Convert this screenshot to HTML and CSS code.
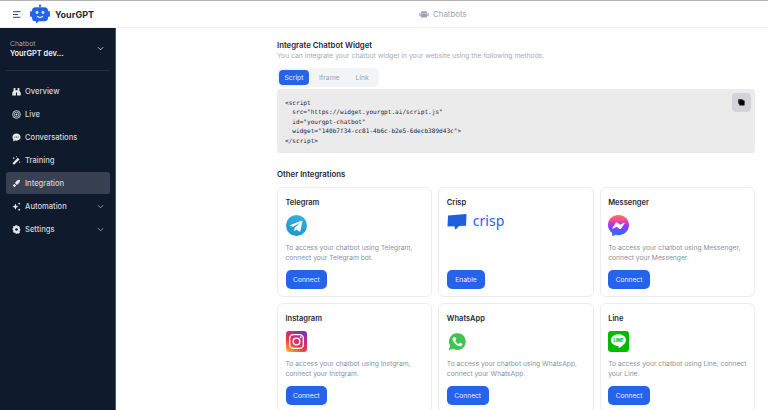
FILE: index.html
```html
<!DOCTYPE html>
<html lang="en">
<head>
<meta charset="utf-8">
<title>YourGPT</title>
<link rel="stylesheet" href="styles.css">
</head>
<body>
<header class="topbar">
  <div class="brand">
    <svg class="menu-icon" viewBox="0 0 8 7"><path d="M0 .7h7.500M0 3.500h5M0 6.300h7.500" stroke="#374151" stroke-width="1" fill="none"/></svg>
    <svg class="logo" viewBox="0 0 20 20"><circle cx="10" cy="1.600" r="1.100" fill="#2563eb"/><rect x="9.400" y="1.600" width="1.200" height="2" fill="#2563eb"/><rect x="0" y="7" width="2" height="6" rx="1" fill="#2563eb"/><rect x="18" y="7" width="2" height="6" rx="1" fill="#2563eb"/><path d="M5.500 3.200h9A3.500 3.500 0 0 1 18 6.700v7a3.500 3.500 0 0 1-3.500 3.500H9L6 19.500v-2.300h-.5A3.500 3.500 0 0 1 2 13.700v-7a3.500 3.500 0 0 1 3.500-3.500z" fill="#2563eb"/><circle cx="7" cy="8.500" r="1.400" fill="#dbeafe"/><circle cx="13" cy="8.500" r="1.400" fill="#dbeafe"/><path d="M7 12.300q3 2.200 6 0" stroke="#dbeafe" stroke-width="1.100" fill="none"/></svg>
    <span class="brand-name">YourGPT</span>
  </div>
  <div class="crumb">
    <svg class="crumb-icon" viewBox="0 0 12 10"><rect x="2" y="1.500" width="8" height="8" rx="2" fill="#9ca3af"/><rect x="0" y="4" width="1.500" height="4" rx=".6" fill="#9ca3af"/><rect x="10.500" y="4" width="1.500" height="4" rx=".6" fill="#9ca3af"/><circle cx="4.500" cy="4.500" r=".8" fill="#fff"/><circle cx="7.500" cy="4.500" r=".8" fill="#fff"/></svg>
    <span>Chatbots</span>
  </div>
</header>
<div class="layout">
  <aside class="sidebar">
    <div class="bot-select">
      <div>
        <div class="bot-label">Chatbot</div>
        <div class="bot-name">YourGPT dev...</div>
      </div>
      <svg class="chev" viewBox="0 0 8 5"><path d="M1 1l3 3 3-3" stroke="#d1d5db" stroke-width="1" fill="none"/></svg>
    </div>
    <nav class="nav">
      <a class="nav-item"><svg class="nav-icon" viewBox="0 0 10 10"><path d="M1.800 1h2v2.500h2.400V1h2v3l1.500 2.500V9.500H5.600V6H4.400v3.500H.3V6.500L1.800 4z" fill="#e5e7eb"/></svg><span>Overview</span></a>
      <a class="nav-item"><svg class="nav-icon" viewBox="0 0 10 10"><g fill="none" stroke="#e5e7eb"><circle cx="5" cy="5" r="4.300" stroke-width=".9"/><circle cx="5" cy="5" r="2.600" stroke-width=".8"/></g><circle cx="5" cy="5" r="1.100" fill="#e5e7eb"/></svg><span>Live</span></a>
      <a class="nav-item"><svg class="nav-icon" viewBox="0 0 10 10"><path d="M5 .5c2.600 0 4.500 1.800 4.500 4S7.600 8.500 5 8.500c-.6 0-1.100-.1-1.600-.2L1.200 9.500l.4-2.100C.9 6.600.5 5.600.5 4.500.5 2.300 2.400.5 5 .5z" fill="#e5e7eb"/><circle cx="3.100" cy="4.500" r=".6" fill="#0f1b2d"/><circle cx="5" cy="4.500" r=".6" fill="#0f1b2d"/><circle cx="6.900" cy="4.500" r=".6" fill="#0f1b2d"/></svg><span>Conversations</span></a>
      <a class="nav-item"><svg class="nav-icon" viewBox="0 0 10 10"><path d="M.5 8L6.500 2 8.300 3.800 2.300 9.800z" fill="#e5e7eb"/><path d="M2 1l.4.900.9.400-.9.400L2 3.600l-.4-.9-.9-.4.900-.4zM8.500 5.800l.3.700.7.300-.7.300-.3.700-.3-.7-.7-.3.700-.3z" fill="#e5e7eb"/><rect x="4.500" y=".4" width="1" height="1" fill="#e5e7eb"/></svg><span>Training</span></a>
      <a class="nav-item nav-active"><svg class="nav-icon" viewBox="0 0 10 10"><path d="M5.800 1.500L9 .8l-.7 3.200-2.800 2.800-2.300-2.300z" fill="#e5e7eb"/><path d="M2.600 5.400l2 2-1.800 1.700-2-2z" fill="#e5e7eb"/></svg><span>Integration</span></a>
      <a class="nav-item"><svg class="nav-icon" viewBox="0 0 10 10"><path d="M3.800 1.800l1 2.400 2.400 1-2.400 1-1 2.400-1-2.400L.4 5.200l2.400-1z" fill="#e5e7eb"/><circle cx="8" cy="1.800" r="1" fill="#e5e7eb"/><circle cx="8" cy="8.500" r="1" fill="#e5e7eb"/></svg><span class="nav-grow">Automation</span><svg class="chev" viewBox="0 0 8 5"><path d="M1 1l3 3 3-3" stroke="#9ca3af" stroke-width="1" fill="none"/></svg></a>
      <a class="nav-item"><svg class="nav-icon" viewBox="0 0 10 10"><path d="M4 .3h2l.3 1.300 1.200-.5 1.400 1.400-.6 1.200.9.800v1.900l-1 .7.600 1.200-1.400 1.400-1.200-.5L6 9.700H4l-.3-1.300-1.200.5-1.400-1.400.6-1.200-1-.7V3.700l.9-.8-.6-1.200L1.500 1.100l1.200.5z" fill="#e5e7eb"/><circle cx="5" cy="5" r="1.500" fill="#0f1b2d"/></svg><span class="nav-grow">Settings</span><svg class="chev" viewBox="0 0 8 5"><path d="M1 1l3 3 3-3" stroke="#9ca3af" stroke-width="1" fill="none"/></svg></a>
    </nav>
  </aside>
  <main class="main">
    <h1 class="title">Integrate Chatbot Widget</h1>
    <p class="subtitle">You can integrate your chatbot widget in your website using the following methods.</p>
    <div class="tabs">
      <span class="tab tab-on">Script</span>
      <span class="tab">Iframe</span>
      <span class="tab">Link</span>
    </div>
    <div class="code">
<pre class="code-text">&lt;script
  src="https://widget.yourgpt.ai/script.js"
  id="yourgpt-chatbot"
  widget="140b7f34-cc81-4b6c-b2e5-6decb389d43c"&gt;
&lt;/script&gt;</pre>
      <button class="copy" aria-label="Copy"><svg viewBox="0 0 8 8"><rect x="0" y="0" width="5.500" height="5.500" rx="1" fill="#374151"/><rect x="1.500" y="1.500" width="6" height="6" rx="1" fill="#000"/></svg></button>
    </div>
    <h2 class="section">Other Integrations</h2>
    <div class="grid">
      <article class="card">
        <h3 class="card-title">Telegram</h3>
        <svg class="card-icon" viewBox="0 0 20 20"><defs><linearGradient id="tg" x1="0.700" y1="0" x2="0.300" y2="1"><stop offset="0" stop-color="#37aee2"/><stop offset="1" stop-color="#1e96c8"/></linearGradient></defs><circle cx="10" cy="10" r="10" fill="url(#tg)"/><path d="M3.800 9.800l11-4.300c.6-.2 1 .1.800 1l-1.900 8.800c-.1.600-.5.800-1 .5l-2.800-2.100-1.400 1.300c-.2.200-.3.300-.6.300l.2-2.900 5.200-4.700c.2-.2 0-.3-.3-.1L6.600 11.100l-2.800-.9c-.6-.1-.6-.5 0-.4z" fill="#fff"/></svg>
        <p class="card-text">To access your chatbot using Telegram, connect your Telegram bot.</p>
        <button class="btn">Connect</button>
      </article>
      <article class="card">
        <h3 class="card-title">Crisp</h3>
        <div class="crisp">
          <svg class="crisp-icon" viewBox="0 0 20 16"><path d="M1 1.500L19.500 0l-.5 11.800-7 .3-3.500 3.700-1.200-3.500L.5 12.500z" fill="#1d5ee0"/></svg>
          <span class="crisp-name">crisp</span>
        </div>
        <p class="card-text">&nbsp;</p>
        <button class="btn btn-enable">Enable</button>
      </article>
      <article class="card">
        <h3 class="card-title">Messenger</h3>
        <svg class="card-icon" viewBox="0 0 20 20"><defs><linearGradient id="ms" x1="0.500" y1="1" x2="0.500" y2="0"><stop offset="0" stop-color="#0a7cff"/><stop offset="0.500" stop-color="#a033ff"/><stop offset="0.800" stop-color="#ff5280"/><stop offset="1" stop-color="#ff7061"/></linearGradient></defs><path d="M10 0c5.600 0 10 4.100 10 9.600s-4.400 9.600-10 9.600c-1 0-2-.1-2.900-.4L4 20.200V17.200C1.500 15.400 0 12.800 0 9.600 0 4.100 4.400 0 10 0z" fill="url(#ms)"/><path d="M4 12.500l3-4.700c.5-.8 1.500-.9 2.200-.4l2.300 1.800 3.700-1.800c.4-.2.800.2.600.5l-3 4.700c-.5.800-1.500.9-2.200.4L8.300 11.200l-3.700 1.800c-.4.200-.8-.2-.6-.5z" fill="#fff"/></svg>
        <p class="card-text">To access your chatbot using Messenger, connect your Messenger.</p>
        <button class="btn">Connect</button>
      </article>
      <article class="card">
        <h3 class="card-title">Instagram</h3>
        <svg class="card-icon" viewBox="0 0 20 20"><defs><linearGradient id="ig" x1="0.100" y1="1" x2="0.700" y2="0"><stop offset="0" stop-color="#fdb03b"/><stop offset="0.400" stop-color="#ee3a42"/><stop offset="0.750" stop-color="#c02b8a"/><stop offset="1" stop-color="#7a36a8"/></linearGradient></defs><rect width="20" height="20" rx="3" fill="url(#ig)"/><rect x="3.500" y="3.500" width="13" height="13" rx="3.500" fill="none" stroke="#fff" stroke-width="1.300"/><circle cx="10" cy="10" r="3.200" fill="none" stroke="#fff" stroke-width="1.300"/><circle cx="14" cy="6" r=".9" fill="#fff"/></svg>
        <p class="card-text">To access your chatbot using Instgram, connect your Instgram.</p>
        <button class="btn">Connect</button>
      </article>
      <article class="card">
        <h3 class="card-title">WhatsApp</h3>
        <svg class="card-icon" viewBox="0 0 20 20"><path d="M1.700 18.300l1.200-4.300a8 8 0 1 1 3 3z" fill="#3fc351"/><path d="M7.200 5.700c.3 0 .6 0 .8.500l.7 1.600c.1.300 0 .5-.1.700l-.6.700c-.2.200-.1.400 0 .6.700 1.200 1.600 2 2.800 2.600.2.100.4.100.6-.1l.7-.9c.2-.2.400-.2.600-.1l1.700.8c.3.100.4.300.3.600-.1 1.100-1.100 1.900-2.300 1.800-3-.3-6.400-3-7-6.400-.2-1.300.7-2.300 1.300-2.400z" fill="#fff"/></svg>
        <p class="card-text">To access your chatbot using WhatsApp, connect your WhatsApp.</p>
        <button class="btn">Connect</button>
      </article>
      <article class="card">
        <h3 class="card-title">Line</h3>
        <svg class="card-icon" viewBox="0 0 20 20"><rect width="20" height="20" rx="3" fill="#00b900"/><path d="M10 3.200c4 0 7.200 2.500 7.200 5.700 0 2.700-3.700 5.800-6.700 7.400-.5.200-.5-.2-.4-.9l.1-.9C6 14.300 2.800 12 2.800 8.900c0-3.200 3.200-5.700 7.200-5.700z" fill="#fff"/><text class="line-text" x="10" y="10.500" text-anchor="middle">LINE</text></svg>
        <p class="card-text">To access your chatbot using Line, connect your Line.</p>
        <button class="btn">Connect</button>
      </article>
    </div>
  </main>
</div>
</body>
</html>
```
FILE: styles.css
```css
* { box-sizing: border-box; }
html, body { margin: 0; height: 100%; }
body {
  width: 768px;
  height: 410px;
  overflow: hidden;
  display: flex;
  flex-direction: column;
  background: #fff;
  font-family: Inter, "Liberation Sans", sans-serif;
  color: #1f2937;
}
.topbar {
  height: 28px;
  flex: none;
  border-top: 1px solid #b5b5b5;
  border-bottom: 1px solid #f0f0f0;
  display: flex;
  align-items: center;
  position: relative;
  padding-left: 13px;
}
.brand { display: flex; align-items: center; }
.menu-icon { width: 8px; height: 7px; }
.logo { width: 20px; height: 20px; margin-left: 9px; }
.brand-name { font-size: 9px; font-weight: 700; color: #1f2937; margin-left: 5px; }
.crumb {
  position: absolute;
  left: 419px;
  top: 0;
  height: 26px;
  display: flex;
  align-items: center;
  gap: 4px;
  font-size: 7.900px;
  color: #9ca3af;
}
.crumb-icon { width: 10px; height: 8px; }
.layout { flex: 1; display: flex; min-height: 0; }
.sidebar {
  width: 116px;
  flex: none;
  background: #0f1b2d;
  border-right: 1px solid #4b5563;
  padding: 0 5px 0 6px;
}
.bot-select {
  height: 43px;
  padding: 11px 4px 0 4px;
  display: flex;
  align-items: flex-start;
  justify-content: space-between;
  border-bottom: 1px solid #27323f;
}
.bot-label { font-size: 6.800px; line-height: 9px; color: #9ca3af; }
.bot-name { font-size: 7.400px; line-height: 12px; font-weight: 600; color: #f3f4f6; }
.bot-select .chev { margin-top: 7px; margin-right: 2px; }
.chev { width: 7px; height: 5px; flex: none; }
.nav { display: flex; flex-direction: column; gap: 1.600px; padding-top: 9.500px; }
.nav-item {
  height: 21.400px;
  display: flex;
  align-items: center;
  padding: 0 6px;
  border-radius: 2.500px;
  font-size: 7.600px;
  font-weight: 500;
  color: #d1d5db;
}
.nav-active { background: #374151; color: #d1d5db; }
.nav-icon { width: 9px; height: 9px; margin-right: 4px; flex: none; }
.nav-grow { flex: 1; }
.main {
  flex: 1;
  min-width: 0;
  overflow: hidden;
  padding: 12px 13px 0 161px;
}
.title { margin: 0; font-size: 7.800px; line-height: 11px; font-weight: 600; color: #1f2937; }
.subtitle { margin: 0; font-size: 6.800px; line-height: 10px; color: #a6acb5; white-space: nowrap; }
.tabs {
  display: flex;
  width: fit-content;
  margin-top: 7px;
  padding: 2px;
  background: #f3f4f6;
  border-radius: 5px;
  height: 19px;
}
.tab {
  height: 15px;
  padding: 0 8px;
  display: flex;
  align-items: center;
  justify-content: center;
  border-radius: 4px;
  font-size: 6.800px;
  color: #9ca3af;
}
.tab-on { background: #2563eb; color: #e5edff; padding: 0 5.500px; margin-right: 2px; }
.code {
  margin-top: 2px;
  height: 64px;
  background: #ebebeb;
  border-radius: 3px;
  padding: 8.500px 8px;
  position: relative;
}
.code-text {
  margin: 0;
  font-family: "DejaVu Sans Mono", "Liberation Mono", monospace;
  font-size: 6.100px;
  line-height: 9.600px;
  color: #1f2937;
}
.copy {
  position: absolute;
  right: 4px;
  top: 4px;
  width: 19px;
  height: 19px;
  padding: 0;
  border: 0;
  border-radius: 4px;
  background: #d4d4d8;
  display: flex;
  align-items: center;
  justify-content: center;
}
.copy svg { width: 7px; height: 7px; }
.section { margin: 16px 0 0; font-size: 7.800px; line-height: 11px; font-weight: 600; color: #1f2937; }
.grid {
  display: grid;
  grid-template-columns: repeat(3, 1fr);
  gap: 6px;
  margin-top: 7px;
}
.card {
  height: 110px;
  border: 1px solid #ececee;
  border-radius: 6px;
  padding: 8px 5px 7px 7.500px;
  display: flex;
  flex-direction: column;
  align-items: flex-start;
}
.card-title { margin: 0; font-size: 7.500px; line-height: 13px; font-weight: 600; color: #1f2937; }
.card-icon { width: 21px; height: 21px; margin-top: 6px; flex: none; }
.line-text { font-family: Inter, "Liberation Sans", sans-serif; font-size: 4.200px; font-weight: 800; fill: #00b900; }
.crisp { display: flex; align-items: flex-start; margin-top: 5px; height: 22px; flex: none; }
.crisp-icon { width: 20px; height: 16px; }
.crisp-name { font-size: 14px; line-height: 14px; color: #2563eb; margin-left: 6px; font-family: "Noto Sans", sans-serif; }
.card-text { margin: 7px 0 0; font-size: 6.720px; line-height: 9.700px; color: #8b929c; flex: 1; }
.btn {
  height: 19px;
  padding: 0 7.500px;
  border: 0;
  border-radius: 5px;
  background: #2563eb;
  color: #e8efff;
  font-family: inherit;
  font-size: 6.700px;
  flex: none;
}
.btn-enable { padding: 0 8.500px; }
```
